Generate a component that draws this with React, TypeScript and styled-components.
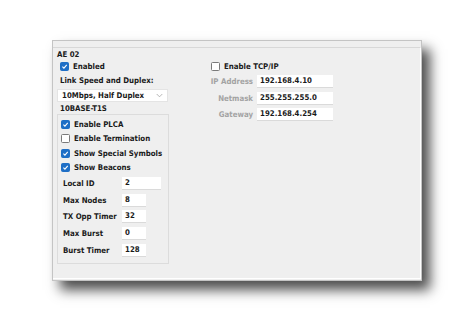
import React from "react";
import styled, { createGlobalStyle } from "styled-components";

const Global = createGlobalStyle`
  html, body { margin: 0; padding: 0; background: #ffffff; }
  body { font-family: "DejaVu Sans Condensed", "DejaVu Sans", Verdana, sans-serif; }
`;

const Stage = styled.div`
  width: 474px;
  height: 321px;
  padding: 40px 0 0 52px;
  box-sizing: border-box;
`;

const Window = styled.div`
  width: 370px;
  height: 241px;
  box-sizing: border-box;
  background: #efefef;
  border: 1px solid #c4c4c4;
  box-shadow: 8px 9px 12px rgba(0, 0, 0, 0.7);
  padding-top: 6px;
  display: flex;
`;

const Panel = styled.div`
  flex: 1;
  border-top: 1px solid #d8d8d8;
  border-right: 1px solid #ffffff;
  border-bottom: 1px solid #ffffff;
  margin-bottom: 1px;
  padding: 3px 0 0 4px;
  display: flex;
  flex-direction: column;
  font-size: 7.8px;
  font-weight: bold;
  color: #1a1a1a;
`;

const Title = styled.div`
  height: 8px;
  line-height: 8px;
`;

const Columns = styled.div`
  display: flex;
  gap: 39px;
`;

const LeftCol = styled.div`
  width: 112px;
  display: flex;
  flex-direction: column;
`;

const RightCol = styled.div`
  display: flex;
  flex-direction: column;
`;

const CheckRow = styled.label`
  display: flex;
  align-items: center;
  gap: 4px;
  height: 14.3px;
  margin-left: 3px;
`;

const Box = styled.span<{ $on: boolean }>`
  width: 9px;
  height: 9px;
  box-sizing: border-box;
  border-radius: 1.5px;
  background: ${(p) => (p.$on ? "#1f6fc6" : "#ffffff")};
  border: 1px solid ${(p) => (p.$on ? "#1f6fc6" : "#7a7a7a")};
  display: flex;
  align-items: center;
  justify-content: center;
`;

const SectionLabel = styled.div`
  height: 12px;
  line-height: 12px;
  margin: 1.5px 0 0 3px;
`;

const Select = styled.div`
  margin-top: 2px;
  height: 13px;
  width: 111px;
  box-sizing: border-box;
  background: #ffffff;
  border: 1px solid #e4e4e4;
  display: flex;
  align-items: center;
  justify-content: space-between;
  padding: 0 4px 0 4px;
`;

const GroupLabel = styled.div`
  height: 11px;
  line-height: 11px;
  margin: 1.5px 0 0 3px;
`;

const Group = styled.div`
  border: 1px solid #dcdcdc;
  height: 149.5px;
  box-sizing: border-box;
  display: flex;
  flex-direction: column;
  padding: 2px 0 0 0;
`;

const FieldList = styled.div`
  margin-top: 0.5px;
  display: flex;
  flex-direction: column;
`;

const FieldRow = styled.div`
  display: flex;
  align-items: center;
  height: 16.75px;
  margin-left: 5px;
`;

const FieldLabel = styled.span<{ $w: number; $dim?: boolean; $right?: boolean }>`
  width: ${(p) => p.$w}px;
  text-align: ${(p) => (p.$right ? "right" : "left")};
  color: ${(p) => (p.$dim ? "#a3a3a3" : "#1a1a1a")};
`;

const Input = styled.div<{ $w: number }>`
  width: ${(p) => p.$w}px;
  height: 13px;
  box-sizing: border-box;
  background: #ffffff;
  border-bottom: 1px solid #dadada;
  line-height: 12px;
  padding-left: 3px;
  margin-left: 4px;
`;

const RightRow = styled.div`
  display: flex;
  align-items: center;
  height: 16.5px;
`;

const Check = ({ on }: { on: boolean }) => (
  <Box $on={on}>
    {on && (
      <svg width="7" height="7" viewBox="0 0 10 10">
        <path d="M2 5.2 L4.2 7.3 L8.2 2.8" stroke="#fff" strokeWidth="1.6" fill="none" />
      </svg>
    )}
  </Box>
);

const Chevron = () => (
  <svg width="7" height="5" viewBox="0 0 8 5">
    <path d="M0.8 0.8 L4 4 L7.2 0.8" stroke="#9a9a9a" strokeWidth="0.8" fill="none" />
  </svg>
);

export default function App() {
  const fields: [string, string, number][] = [
    ["Local ID", "2", 39],
    ["Max Nodes", "8", 24],
    ["TX Opp Timer", "32", 24],
    ["Max Burst", "0", 24],
    ["Burst Timer", "128", 24],
  ];
  const ip: [string, string][] = [
    ["IP Address", "192.168.4.10"],
    ["Netmask", "255.255.255.0"],
    ["Gateway", "192.168.4.254"],
  ];
  return (
    <Stage>
      <Global />
      <Window>
        <Panel>
          <Title>AE 02</Title>
          <Columns>
            <LeftCol>
              <CheckRow>
                <Check on />
                Enabled
              </CheckRow>
              <SectionLabel>Link Speed and Duplex:</SectionLabel>
              <Select>
                <span>10Mbps, Half Duplex</span>
                <Chevron />
              </Select>
              <GroupLabel>10BASE-T1S</GroupLabel>
              <Group>
                <CheckRow>
                  <Check on />
                  Enable PLCA
                </CheckRow>
                <CheckRow>
                  <Check on={false} />
                  Enable Termination
                </CheckRow>
                <CheckRow>
                  <Check on />
                  Show Special Symbols
                </CheckRow>
                <CheckRow>
                  <Check on />
                  Show Beacons
                </CheckRow>
                <FieldList>
                  {fields.map(([l, v, w]) => (
                    <FieldRow key={l}>
                      <FieldLabel $w={55}>{l}</FieldLabel>
                      <Input $w={w}>{v}</Input>
                    </FieldRow>
                  ))}
                </FieldList>
              </Group>
            </LeftCol>
            <RightCol>
              <CheckRow>
                <Check on={false} />
                Enable TCP/IP
              </CheckRow>
              {ip.map(([l, v]) => (
                <RightRow key={l}>
                  <FieldLabel $w={45} $dim $right>
                    {l}
                  </FieldLabel>
                  <Input $w={76}>{v}</Input>
                </RightRow>
              ))}
            </RightCol>
          </Columns>
        </Panel>
      </Window>
    </Stage>
  );
}
